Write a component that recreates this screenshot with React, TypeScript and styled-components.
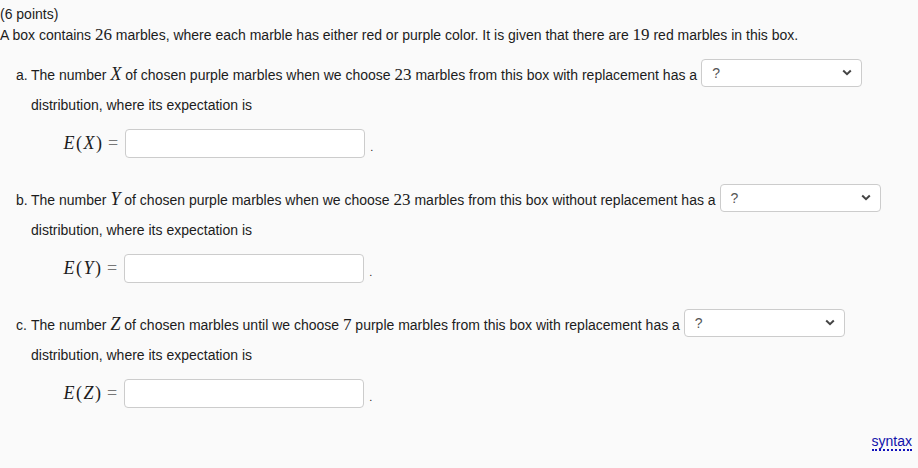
import React from 'react'
import styled, { createGlobalStyle } from 'styled-components'

const GlobalStyle = createGlobalStyle`
  html, body {
    margin: 0;
    padding: 0;
    background: #fafafa;
  }
  body {
    font-family: 'Liberation Sans', Arial, sans-serif;
    font-size: 14px;
    color: #1c1c1c;
  }
`

const Page = styled.div`
  position: relative;
  width: 918px;
  height: 468px;
  box-sizing: border-box;
  padding-top: 4px;
`

const Line = styled.div`
  line-height: 21px;
  white-space: nowrap;
`

const Num = styled.span`
  font-family: 'Liberation Serif', 'Times New Roman', serif;
  font-size: 17px;
  line-height: 0;
`

const MathVar = styled.span`
  font-family: 'Liberation Serif', 'Times New Roman', serif;
  font-style: italic;
  font-size: 18px;
  line-height: 0;
`

const Parts = styled.div`
  margin-top: 14px;
  display: flex;
  flex-direction: column;
  gap: 27px;
`

const Part = styled.div`
  display: flex;
  padding-left: 16px;
`

const Marker = styled.div`
  width: 15px;
  line-height: 30px;
`

const Body = styled.div`
  display: flex;
  flex-direction: column;
`

const FirstLine = styled.div`
  display: flex;
  align-items: center;
  height: 30px;
  white-space: nowrap;
`

const Sentence = styled.span`
  line-height: 30px;
`

const TextLine = styled.div`
  line-height: 30px;
`

const Select = styled.span`
  display: inline-flex;
  align-items: center;
  justify-content: space-between;
  box-sizing: border-box;
  width: 161px;
  height: 28px;
  margin: 0 0 5px 4px;
  padding: 0 9px 0 10px;
  border: 1px solid #cccccc;
  border-radius: 4px;
  background: #fff;
  line-height: 1;
  font-size: 14px;
  color: #555;
`

const Equation = styled.div`
  display: flex;
  align-items: center;
  margin-top: 9px;
  padding-left: 31px;
`

const Label = styled.span`
  font-family: 'Liberation Serif', 'Times New Roman', serif;
  font-size: 18px;
  color: #1c1c1c;
  margin-right: 7px;
  white-space: nowrap;
`

const Italic = styled.i`
  font-style: italic;
  margin: 0 1.5px;
`

const Eq = styled.span`
  color: #777;
  margin-left: 6px;
`

const Input = styled.div`
  box-sizing: border-box;
  width: 240px;
  height: 29px;
  border: 1px solid #cccccc;
  border-radius: 4px;
  background: #fff;
`

const Dot = styled.span`
  align-self: flex-end;
  margin: 0 0 5px 5px;
  font-size: 11px;
  line-height: 11px;
`

const Syntax = styled.a`
  position: absolute;
  right: 6px;
  top: 434px;
  color: #1111aa;
  text-decoration: none;
  border-bottom: 2px dotted #1111bb;
  line-height: 15px;
  font-size: 14px;
`

const Chevron = () => (
  <svg width="10" height="7" viewBox="0 0 10 7">
    <path d="M1.2 1.5 L5 5.2 L8.8 1.5" fill="none" stroke="#444" strokeWidth="2" />
  </svg>
)

type PartProps = {
  marker: string
  variable: string
  children: React.ReactNode
}

const QuestionPart = ({ marker, variable, children }: PartProps) => (
  <Part>
    <Marker>{marker}</Marker>
    <Body>
      <FirstLine>
        <Sentence>{children}</Sentence>
        <Select>
          <span>?</span>
          <Chevron />
        </Select>
      </FirstLine>
      <TextLine>distribution, where its expectation is</TextLine>
      <Equation>
        <Label>
          <Italic>E</Italic>(<Italic>{variable}</Italic>)<Eq>=</Eq>
        </Label>
        <Input />
        <Dot>.</Dot>
      </Equation>
    </Body>
  </Part>
)

export default function App() {
  return (
    <Page>
      <GlobalStyle />
      <Line>(6 points)</Line>
      <Line>
        A box contains <Num>26</Num> marbles, where each marble has either red or purple color. It is
        given that there are <Num>19</Num> red marbles in this box.
      </Line>
      <Parts>
        <QuestionPart marker="a." variable="X">
          The number <MathVar>X</MathVar> of chosen purple marbles when we choose <Num>23</Num> marbles
          from this box with replacement has a
        </QuestionPart>
        <QuestionPart marker="b." variable="Y">
          The number <MathVar>Y</MathVar> of chosen purple marbles when we choose <Num>23</Num> marbles
          from this box without replacement has a
        </QuestionPart>
        <QuestionPart marker="c." variable="Z">
          The number <MathVar>Z</MathVar> of chosen marbles until we choose <Num>7</Num> purple marbles
          from this box with replacement has a
        </QuestionPart>
      </Parts>
      <Syntax href="#">syntax</Syntax>
    </Page>
  )
}
